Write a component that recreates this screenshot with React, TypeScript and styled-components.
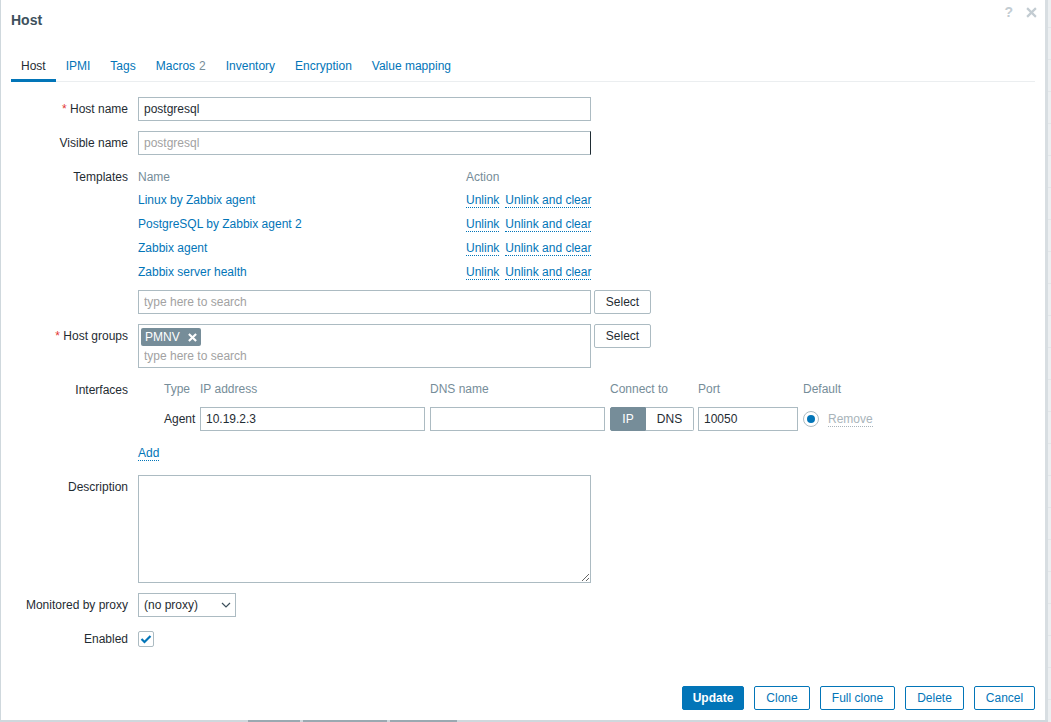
import * as React from 'react';
import styled, { createGlobalStyle } from 'styled-components';

const GlobalStyle = createGlobalStyle`
  html, body {
    margin: 0;
    padding: 0;
    background: #eceff1;
  }
  * {
    box-sizing: border-box;
  }
`;

const Page = styled.div`
  width: 1051px;
  height: 722px;
  overflow: hidden;
  font-family: "Liberation Sans", Arial, sans-serif;
  font-size: 12px;
  color: #1f2c33;
  background: repeating-linear-gradient(
    to bottom,
    #eceff1 0,
    #eceff1 27px,
    #e2e6e9 27px,
    #e2e6e9 28px,
    #eceff1 28px,
    #eceff1 32px
  );
`;

const Modal = styled.div`
  width: 1048px;
  height: 720px;
  background: #fff;
  border-left: 1px solid #cfd8dd;
  border-right: 3px solid #d8dee2;
  display: flex;
  flex-direction: column;
  padding: 0 10px 10px 10px;
`;

const BottomEdge = styled.div`
  display: flex;
  gap: 3px;
  width: 1048px;
  height: 2px;
  padding-left: 248px;
  background: #cfd8dd;
`;

const BehindButton = styled.span<{ $w: number }>`
  width: ${p => p.$w}px;
  background: #9aa9b1;
`;

const Header = styled.header`
  height: 40px;
  display: flex;
  align-items: center;
  justify-content: space-between;
`;

const Title = styled.h4`
  margin: 0;
  font-size: 14px;
  font-weight: bold;
  color: #3d505c;
`;

const HeaderIcons = styled.div`
  display: flex;
  align-items: center;
  gap: 13px;
  margin: -16px -2px 0 0;
  color: #c3ccd2;
`;

const Help = styled.span`
  font-size: 14px;
  font-weight: bold;
  line-height: 14px;
`;

const TabBar = styled.nav`
  display: flex;
  height: 33px;
  margin-top: 9px;
  border-bottom: 1px solid #ebeef0;
`;

const Tab = styled.a<{ $active?: boolean }>`
  display: block;
  height: 33px;
  padding: 10px 10px 0;
  line-height: 14px;
  white-space: nowrap;
  color: ${p => (p.$active ? '#1f2c33' : '#0275b8')};
  border-bottom: 3px solid ${p => (p.$active ? '#0275b8' : 'transparent')};
`;

const Count = styled.span`
  color: #768d99;
  margin-left: 4px;
`;

const Form = styled.form`
  display: flex;
  flex-direction: column;
  gap: 10px;
  margin-top: 15px;
  flex: 1;
`;

const Row = styled.div`
  display: grid;
  grid-template-columns: 117px 1fr;
  column-gap: 10px;
`;

const Label = styled.label<{ $required?: boolean }>`
  text-align: right;
  line-height: 24px;
  white-space: nowrap;

  &::before {
    content: ${p => (p.$required ? "'* '" : 'none')};
    color: #e33734;
  }
`;

const TextInput = styled.input<{ $width?: number; $caret?: boolean }>`
  display: block;
  width: ${p => p.$width ?? 453}px;
  height: 24px;
  padding: 0 5px;
  border: 1px solid #acbbc2;
  border-right-color: ${p => (p.$caret ? '#1f2c33' : '#acbbc2')};
  border-radius: 0;
  outline: none;
  background: #fff;
  font: inherit;
  color: #1f2c33;

  &::placeholder {
    color: #a2a2a2;
    opacity: 1;
  }
`;

const TemplateTable = styled.table`
  width: 453px;
  table-layout: fixed;
  border-collapse: collapse;

  th {
    height: 23px;
    padding: 0;
    font-weight: normal;
    text-align: left;
    color: #768d99;
  }

  td {
    height: 24px;
    padding: 0;
  }
`;

const NameCol = styled.col`
  width: 328px;
`;

const TemplateLink = styled.a`
  color: #0275b8;
`;

const ActionLink = styled.a<{ $muted?: boolean }>`
  color: ${p => (p.$muted ? '#a9b4ba' : '#0275b8')};
  border-bottom: 1px dotted ${p => (p.$muted ? '#a9b4ba' : '#0275b8')};
  white-space: nowrap;
  & + & {
    margin-left: 6px;
  }
`;

const PickerRow = styled.div`
  display: flex;
  align-items: flex-start;
  gap: 3px;
  margin-top: 6px;
`;

const FlushPicker = styled(PickerRow)`
  margin-top: 0;
`;

const Button = styled.button`
  height: 24px;
  padding: 0 10px;
  border: 1px solid #acbbc2;
  border-radius: 2px;
  background: #fff;
  font: inherit;
  color: #1f2c33;
`;

const SelectButton = styled(Button)`
  width: 57px;
  padding: 0;
`;

const MultiSelect = styled.div`
  width: 453px;
  height: 44px;
  border: 1px solid #acbbc2;
  padding: 3px 2px 0;
`;

const Chip = styled.span`
  display: inline-flex;
  align-items: center;
  gap: 8px;
  height: 18px;
  padding: 0 4px;
  border-radius: 2px;
  background: #768d99;
  color: #fff;
  line-height: 18px;
`;

const BareInput = styled.input`
  display: block;
  width: 100%;
  height: 20px;
  padding: 0 3px;
  margin-top: 0;
  border: 0;
  outline: none;
  font: inherit;

  &::placeholder {
    color: #a2a2a2;
    opacity: 1;
  }
`;

const InterfaceGrid = styled.div`
  display: grid;
  grid-template-columns: 36px 230px 180px 88px 105px auto;
  grid-template-rows: 22px 24px;
  row-gap: 7px;
  padding-left: 26px;
  align-items: center;
`;

const ColHead = styled.div`
  color: #768d99;
  white-space: nowrap;
`;

const AgentText = styled.div`
  white-space: nowrap;
`;

const Toggle = styled.div`
  display: flex;
  width: 84px;
  height: 24px;
`;

const ToggleOption = styled.div<{ $on?: boolean }>`
  display: flex;
  align-items: center;
  justify-content: center;
  width: ${p => (p.$on ? 36 : 48)}px;
  background: ${p => (p.$on ? '#768d99' : '#fff')};
  color: ${p => (p.$on ? '#fff' : '#1f2c33')};
  border: 1px solid ${p => (p.$on ? '#768d99' : '#acbbc2')};
  border-left-width: ${p => (p.$on ? 1 : 0)}px;
  border-radius: ${p => (p.$on ? '2px 0 0 2px' : '0 2px 2px 0')};
`;

const DefaultCell = styled.div`
  display: flex;
  align-items: center;
  gap: 9px;
`;

const Radio = styled.span`
  display: flex;
  align-items: center;
  justify-content: center;
  width: 16px;
  height: 16px;
  border: 1px solid #acbbc2;
  border-radius: 50%;

  &::after {
    content: '';
    width: 8px;
    height: 8px;
    border-radius: 50%;
    background: #0275b8;
  }
`;

const AddLine = styled.div`
  line-height: 24px;
`;

const TextArea = styled.textarea`
  display: block;
  width: 453px;
  height: 108px;
  border: 1px solid #acbbc2;
  border-radius: 0;
  outline: none;
  font: inherit;
  padding: 4px 5px;
`;

const FakeSelect = styled.div`
  display: flex;
  align-items: center;
  justify-content: space-between;
  width: 98px;
  height: 24px;
  padding: 0 4px 0 5px;
  border: 1px solid #acbbc2;
`;

const CheckCell = styled.div`
  display: flex;
  align-items: center;
  height: 24px;
`;

const CheckBox = styled.span`
  display: flex;
  align-items: center;
  justify-content: center;
  width: 16px;
  height: 16px;
  border: 1px solid #acbbc2;
  border-radius: 2px;
`;

const Footer = styled.footer`
  display: flex;
  justify-content: flex-end;
  gap: 10px;
  margin-top: auto;
`;

const PrimaryAction = styled.button`
  height: 24px;
  padding: 0;
  width: 62px;
  border: 1px solid #0275b8;
  border-radius: 2px;
  background: #0275b8;
  color: #fff;
  font: inherit;
  font-weight: bold;
`;

const SecondaryAction = styled.button<{ $w: number }>`
  height: 24px;
  width: ${p => p.$w}px;
  padding: 0;
  border: 1px solid #0275b8;
  border-radius: 2px;
  background: #fff;
  color: #0275b8;
  font: inherit;
`;

const templates = [
  'Linux by Zabbix agent',
  'PostgreSQL by Zabbix agent 2',
  'Zabbix agent',
  'Zabbix server health',
];

const tabs = ['IPMI', 'Tags', 'Macros', 'Inventory', 'Encryption', 'Value mapping'];

function Cross({ size, color, weight }: { size: number; color: string; weight: number }) {
  return (
    <svg width={size} height={size} viewBox="0 0 10 10" aria-hidden="true">
      <path d="M1 1 L9 9 M9 1 L1 9" stroke={color} strokeWidth={weight} fill="none" />
    </svg>
  );
}

export default function App() {
  return (
    <Page>
      <GlobalStyle />
      <Modal>
        <Header>
          <Title>Host</Title>
          <HeaderIcons>
            <Help>?</Help>
            <Cross size={11} color="#c3ccd2" weight={2} />
          </HeaderIcons>
        </Header>
        <TabBar>
          <Tab $active>Host</Tab>
          {tabs.map(t => (
            <Tab key={t}>
              {t}
              {t === 'Macros' && <Count>2</Count>}
            </Tab>
          ))}
        </TabBar>
        <Form onSubmit={e => e.preventDefault()}>
          <Row>
            <Label $required>Host name</Label>
            <TextInput defaultValue="postgresql" />
          </Row>
          <Row>
            <Label>Visible name</Label>
            <TextInput placeholder="postgresql" $caret />
          </Row>
          <Row>
            <Label>Templates</Label>
            <div>
              <TemplateTable>
                <colgroup>
                  <NameCol />
                  <col />
                </colgroup>
                <thead>
                  <tr>
                    <th>Name</th>
                    <th>Action</th>
                  </tr>
                </thead>
                <tbody>
                  {templates.map(t => (
                    <tr key={t}>
                      <td><TemplateLink>{t}</TemplateLink></td>
                      <td>
                        <ActionLink>Unlink</ActionLink>
                        <ActionLink>Unlink and clear</ActionLink>
                      </td>
                    </tr>
                  ))}
                </tbody>
              </TemplateTable>
              <PickerRow>
                <TextInput placeholder="type here to search" />
                <SelectButton type="button">Select</SelectButton>
              </PickerRow>
            </div>
          </Row>
          <Row>
            <Label $required>Host groups</Label>
            <FlushPicker>
              <MultiSelect>
                <Chip>
                  PMNV
                  <Cross size={9} color="#fff" weight={2.4} />
                </Chip>
                <BareInput placeholder="type here to search" />
              </MultiSelect>
              <SelectButton type="button">Select</SelectButton>
            </FlushPicker>
          </Row>
          <Row>
            <Label>Interfaces</Label>
            <InterfaceGrid>
              <ColHead>Type</ColHead>
              <ColHead>IP address</ColHead>
              <ColHead>DNS name</ColHead>
              <ColHead>Connect to</ColHead>
              <ColHead>Port</ColHead>
              <ColHead>Default</ColHead>
              <AgentText>Agent</AgentText>
              <TextInput $width={225} defaultValue="10.19.2.3" />
              <TextInput $width={175} />
              <Toggle>
                <ToggleOption $on>IP</ToggleOption>
                <ToggleOption>DNS</ToggleOption>
              </Toggle>
              <TextInput $width={100} defaultValue="10050" />
              <DefaultCell>
                <Radio />
                <ActionLink $muted>Remove</ActionLink>
              </DefaultCell>
            </InterfaceGrid>
          </Row>
          <Row>
            <span />
            <AddLine><ActionLink>Add</ActionLink></AddLine>
          </Row>
          <Row>
            <Label>Description</Label>
            <TextArea />
          </Row>
          <Row>
            <Label>Monitored by proxy</Label>
            <FakeSelect>
              (no proxy)
              <svg width="10" height="6" viewBox="0 0 10 6" aria-hidden="true">
                <path d="M1 1 L5 5 L9 1" stroke="#3d505c" strokeWidth="1.2" fill="none" />
              </svg>
            </FakeSelect>
          </Row>
          <Row>
            <Label>Enabled</Label>
            <CheckCell>
              <CheckBox>
                <svg width="12" height="10" viewBox="0 0 12 10" aria-hidden="true">
                  <path d="M1.5 5 L4.5 8 L10.5 2" stroke="#0275b8" strokeWidth="2.2" fill="none" />
                </svg>
              </CheckBox>
            </CheckCell>
          </Row>
          <Footer>
            <PrimaryAction type="button">Update</PrimaryAction>
            <SecondaryAction type="button" $w={56}>Clone</SecondaryAction>
            <SecondaryAction type="button" $w={75}>Full clone</SecondaryAction>
            <SecondaryAction type="button" $w={59}>Delete</SecondaryAction>
            <SecondaryAction type="button" $w={61}>Cancel</SecondaryAction>
          </Footer>
        </Form>
      </Modal>
      <BottomEdge>
        <BehindButton $w={52} />
        <BehindButton $w={84} />
        <BehindButton $w={67} />
      </BottomEdge>
    </Page>
  );
}
